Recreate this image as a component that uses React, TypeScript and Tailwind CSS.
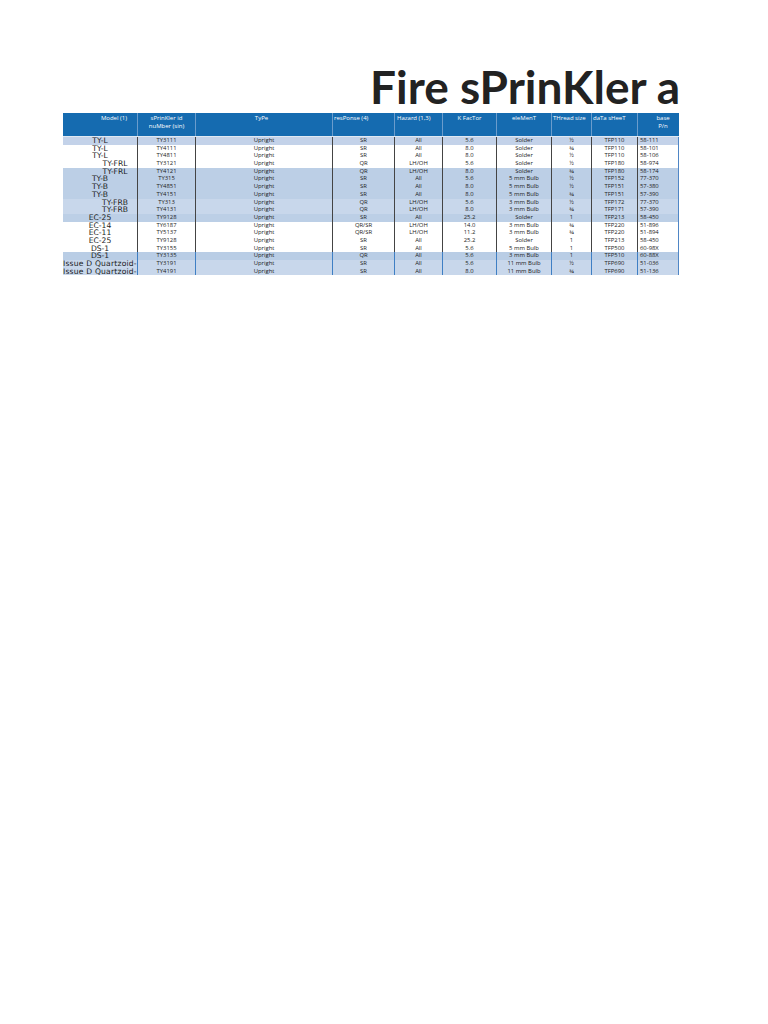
import React from "react";

type Row = {
  m: string;
  id: string;
  r: string;
  h: string;
  k: string;
  e: string;
  t: string;
  d: string;
  p: string;
  bg: string;
  ml?: string;
  blueLines?: boolean;
};

const rows: Row[] = [
  { m: "TY-L", id: "TY3111", r: "SR", h: "All", k: "5.6", e: "Solder", t: "½", d: "TFP110", p: "58-111", bg: "bg-[#c3d2e9]" },
  { m: "TY-L", id: "TY4111", r: "SR", h: "All", k: "8.0", e: "Solder", t: "¾", d: "TFP110", p: "58-101", bg: "bg-white" },
  { m: "TY-L", id: "TY4811", r: "SR", h: "All", k: "8.0", e: "Solder", t: "½", d: "TFP110", p: "58-106", bg: "bg-white" },
  { m: "TY-FRL", id: "TY3121", r: "QR", h: "LH/OH", k: "5.6", e: "Solder", t: "½", d: "TFP180", p: "58-974", bg: "bg-white", ml: "pl-[30px]" },
  { m: "TY-FRL", id: "TY4121", r: "QR", h: "LH/OH", k: "8.0", e: "Solder", t: "¾", d: "TFP180", p: "58-174", bg: "bg-[#bccfe6]", ml: "pl-[30px]" },
  { m: "TY-B", id: "TY315", r: "SR", h: "All", k: "5.6", e: "5 mm Bulb", t: "½", d: "TFP152", p: "77-370", bg: "bg-[#bccfe6]" },
  { m: "TY-B", id: "TY4851", r: "SR", h: "All", k: "8.0", e: "5 mm Bulb", t: "½", d: "TFP151", p: "57-380", bg: "bg-[#bccfe6]" },
  { m: "TY-B", id: "TY4151", r: "SR", h: "All", k: "8.0", e: "5 mm Bulb", t: "¾", d: "TFP151", p: "57-390", bg: "bg-[#bccfe6]" },
  { m: "TY-FRB", id: "TY313", r: "QR", h: "LH/OH", k: "5.6", e: "3 mm Bulb", t: "½", d: "TFP172", p: "77-370", bg: "bg-[#c8d7eb]", ml: "pl-[30px]" },
  { m: "TY-FRB", id: "TY4131", r: "QR", h: "LH/OH", k: "8.0", e: "3 mm Bulb", t: "¾", d: "TFP171", p: "57-390", bg: "bg-[#c8d7eb]", ml: "pl-[30px]" },
  { m: "EC-25", id: "TY9128", r: "SR", h: "All", k: "25.2", e: "Solder", t: "1", d: "TFP213", p: "58-450", bg: "bg-[#bccfe6]" },
  { m: "EC-14", id: "TY6187", r: "QR/SR", h: "LH/OH", k: "14.0", e: "3 mm Bulb", t: "¾", d: "TFP220", p: "51-896", bg: "bg-white" },
  { m: "EC-11", id: "TY5137", r: "QR/SR", h: "LH/OH", k: "11.2", e: "3 mm Bulb", t: "¾", d: "TFP220", p: "51-894", bg: "bg-white" },
  { m: "EC-25", id: "TY9128", r: "SR", h: "All", k: "25.2", e: "Solder", t: "1", d: "TFP213", p: "58-450", bg: "bg-white" },
  { m: "DS-1", id: "TY3155", r: "SR", h: "All", k: "5.6", e: "5 mm Bulb", t: "1", d: "TFP500", p: "60-98X", bg: "bg-white" },
  { m: "DS-1", id: "TY3135", r: "QR", h: "All", k: "5.6", e: "3 mm Bulb", t: "1", d: "TFP510", p: "60-88X", bg: "bg-[#b9cde5]", blueLines: true },
  { m: "Issue D Quartzoid-", id: "TY3191", r: "SR", h: "All", k: "5.6", e: "11 mm Bulb", t: "½", d: "TFP690", p: "51-036", bg: "bg-[#c8d7eb]", blueLines: true },
  { m: "Issue D Quartzoid-", id: "TY4191", r: "SR", h: "All", k: "8.0", e: "11 mm Bulb", t: "¾", d: "TFP690", p: "51-136", bg: "bg-[#c8d7eb]", blueLines: true },
];

const grid =
  "grid grid-cols-[75px_58px_137px_62px_48px_54px_55px_40px_46px_41px]";

export default function App() {
  return (
    <div className="w-[768px] h-[1024px] bg-white">
      <div className="ml-[63px] w-[616px] pt-[65px]">
        <div className="h-[44px] pl-[307px] mb-[4px]">
          <div
            className="text-[46px] leading-[44px] font-bold text-[#222222] whitespace-nowrap"
            style={{ fontFamily: "Lato, 'Open Sans', sans-serif" }}
          >
            Fire sPrinKler a
          </div>
        </div>

        {/* header */}
        <div
          className={`${grid} h-[24px] bg-[#156bb0] text-white text-[6px] leading-[8px] font-medium border-b border-[#dfe8f3]`}
          style={{ fontFamily: "'Open Sans', sans-serif" }}
        >
          <div className="text-right pr-[10px] pt-[1px] border-r border-[#6b9ccc]">Model (1)</div>
          <div className="text-center pt-[1px] border-r border-[#6b9ccc]">
            sPrinKler id
            <br />
            nuMber (sin)
          </div>
          <div className="text-center pr-[5px] pt-[1px] border-r border-[#6b9ccc]">TyPe</div>
          <div className="pl-[1px] pt-[1px] border-r border-[#6b9ccc]">resPonse (4)</div>
          <div className="pl-[2px] pt-[1px] border-r border-[#6b9ccc]">Hazard (1,3)</div>
          <div className="text-center pt-[1px] border-r border-[#6b9ccc]">K FacTor</div>
          <div className="text-center pt-[1px] border-r border-[#6b9ccc]">eleMenT</div>
          <div className="pl-[1px] pt-[1px] border-r border-[#6b9ccc] whitespace-nowrap">THread size</div>
          <div className="pl-[1px] pt-[1px] border-r border-[#6b9ccc]">daTa sHeeT</div>
          <div className="text-center pl-[9px] pt-[1px]">
            base
            <br />
            P/n
          </div>
        </div>

        {/* rows */}
        <div className="border-l border-r border-[#4f86c6]">
          {rows.map((r, i) => {
            const line = r.blueLines ? "border-r border-[#3f7fc4]" : "border-r border-[#444444]";
            return (
              <div
                key={i}
                className={`${grid} h-[7.7px] ${r.bg} text-[#222222] text-[5.9px] leading-[7.7px] -ml-px`}
                style={{ fontFamily: "'Open Sans', sans-serif" }}
              >
                <div
                  className={`${line} text-[7.6px] leading-[7.7px] text-[#1a1a1a] whitespace-nowrap overflow-hidden ${
                    r.m.startsWith("Issue") ? "text-left tracking-[0.2px]" : "text-center"
                  } ${r.ml ?? ""}`}
                  style={{ fontFamily: "'DejaVu Sans', sans-serif" }}
                >
                  {r.m}
                </div>
                <div className={`${line} text-center`}>{r.id}</div>
                <div className={`${line} text-center`}>Upright</div>
                <div className={`${line} text-center`}>{r.r}</div>
                <div className={`${line} text-center`}>{r.h}</div>
                <div className={`${line} text-center`}>{r.k}</div>
                <div className={`${line} text-center`}>{r.e}</div>
                <div className={`${line} text-center`}>{r.t}</div>
                <div className={`${line} text-center`}>{r.d}</div>
                <div className="pl-[2px]">{r.p}</div>
              </div>
            );
          })}
        </div>
      </div>
    </div>
  );
}
